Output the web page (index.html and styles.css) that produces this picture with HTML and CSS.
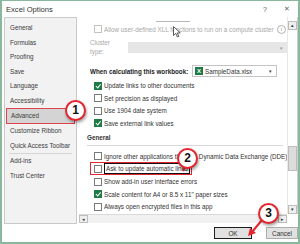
FILE: index.html
```html
<!DOCTYPE html>
<html lang="en">
<head>
  <meta charset="UTF-8">
  <title>Excel Options</title>
  <link rel="stylesheet" href="styles.css">
</head>
<body>
  <div class="window">
    <header class="titlebar">
      <span class="title">Excel Options</span>
      <span class="help">?</span>
      <span class="close">&#x2715;</span>
    </header>
    <div class="body">
      <nav class="nav">
        <div class="nav-item">General</div>
        <div class="nav-item">Formulas</div>
        <div class="nav-item">Proofing</div>
        <div class="nav-item">Save</div>
        <div class="nav-item">Language</div>
        <div class="nav-item">Accessibility</div>
        <div class="nav-item active">Advanced</div>
        <div class="nav-item">Customize Ribbon</div>
        <div class="nav-item">Quick Access Toolbar</div>
        <div class="nav-sep"></div>
        <div class="nav-item">Add-ins</div>
        <div class="nav-item">Trust Center</div>
      </nav>
      <div class="right">
        <div class="pane">
          <div class="scroll-area">
            <div class="content">
              <div class="tip-line"></div>
              <div class="row disabled">
                <span class="check"></span>
                <span class="label">Allow user-defined XLL functions to run on a compute cluster</span>
                <span class="info">i</span>
              </div>
              <div class="cluster">
                <span class="cluster-label">Cluster<br>type:</span>
                <span class="select wide"><span class="caret">&#9662;</span></span>
              </div>
              <div class="calc">
                <span class="bold">When calculating this workbook:</span>
                <span class="select book">
                  <span class="xl">X</span>
                  <span class="book-name">SampleData.xlsx</span>
                  <span class="caret dark">&#9662;</span>
                </span>
              </div>
              <div class="row"><span class="check on"></span><span>Update links to other documents</span></div>
              <div class="row"><span class="check"></span><span>Set precision as displayed</span></div>
              <div class="row"><span class="check"></span><span>Use 1904 date system</span></div>
              <div class="row"><span class="check on"></span><span>Save external link values</span></div>
              <div class="section">General</div>
              <div class="row"><span class="check"></span><span>Ignore other applications that use Dynamic Data Exchange (DDE)</span></div>
              <div class="row marked"><span class="check"></span><span class="focus">Ask to update automatic links</span></div>
              <div class="row"><span class="check"></span><span>Show add-in user interface errors</span></div>
              <div class="row"><span class="check on"></span><span>Scale content for A4 or 8.5 x 11" paper sizes</span></div>
              <div class="row"><span class="check"></span><span>Always open encrypted files in this app</span></div>
              <div class="row cut"><span>At</span></div>
            </div>
            <div class="vscroll">
              <span class="arrow">&#9652;</span>
              <span class="thumb"></span>
              <span class="arrow">&#9662;</span>
            </div>
          </div>
          <div class="hscroll">
            <span class="arrow">&#9666;</span>
            <span class="arrow">&#9656;</span>
          </div>
        </div>
        <div class="footer">
          <button class="btn ok">OK</button>
          <button class="btn">Cancel</button>
        </div>
      </div>
    </div>

    <!-- step markers drawn over the dialog -->
    <svg class="cursor" width="8" height="12" viewBox="0 0 8 12">
      <path d="M0.5 0.5 L0.5 9.5 L2.8 7.4 L4.4 11 L5.8 10.4 L4.3 6.9 L7.3 6.9 Z" fill="#fff" stroke="#333" stroke-width="0.8"/>
    </svg>
    <svg class="arrows" width="300" height="244" viewBox="0 0 300 244">
      <path d="M186 166 L183 171" stroke="#e3262f" stroke-width="2" fill="none"/>
      <path d="M262 220 L252 232" stroke="#e3262f" stroke-width="2" fill="none"/>
      <path d="M248 236 L250 228 L256 233 Z" fill="#e3262f"/>
    </svg>
    <span class="badge b1">1</span>
    <span class="badge b2">2</span>
    <span class="badge b3">3</span>
  </div>
</body>
</html>
```

FILE: styles.css
```css
body {
  margin: 0;
  background: #fff;
}
.window {
  position: relative;
  width: 300px;
  height: 244px;
  box-sizing: border-box;
  border: 2px solid #8ab89b;
  border-top-width: 1px;
  background: #fff;
  font-family: 'Liberation Sans', Arial, sans-serif;
  font-size: 6.3px;
  color: #333;
  overflow: hidden;
}
.titlebar {
  height: 16px;
  display: flex;
  align-items: center;
  padding: 0 8px 0 4px;
  font-size: 7.6px;
}
.title {
  flex: 1;
}
.help {
  color: #666;
  margin-right: 17px;
}
.close {
  color: #666;
  font-size: 7px;
}
.body {
  display: flex;
  padding-left: 2px;
}
.nav {
  width: 73px;
  flex-shrink: 0;
  height: 207px;
  box-sizing: border-box;
  border: 1px solid #c9c9c9;
  background: #f2f2f2;
  padding-top: 3px;
}
.nav-item {
  height: 14.5px;
  line-height: 14.5px;
  padding-left: 5px;
  color: #3a3a3a;
  white-space: nowrap;
}
.nav-item.active {
  margin: 0 1px;
  padding-left: 4px;
  height: 14px;
  border: 1px solid #e2434b;
  background: #d4d4d4;
}
.nav-sep {
  height: 1px;
  background: #d6d6d6;
  margin: 0 4px;
}
.right {
  flex: 1;
  min-width: 0;
  margin-left: 2px;
  display: flex;
  flex-direction: column;
}
.pane {
  height: 206px;
  display: flex;
  flex-direction: column;
}
.scroll-area {
  flex: 1;
  display: flex;
  min-height: 0;
}
.content {
  flex: 1;
  min-width: 0;
  overflow: hidden;
  padding: 6px 0 0 8px;
  position: relative;
}
.tip-line {
  position: absolute;
  left: 77px;
  top: 4px;
  width: 34px;
  height: 1px;
  background: #b8b8b8;
}
.row {
  display: flex;
  align-items: center;
  height: 12.5px;
  padding-left: 7px;
  white-space: nowrap;
}
.row.disabled {
  color: #a8a8a8;
}
.label {
  flex: 1;
}
.check {
  width: 6px;
  height: 6px;
  border: 1px solid #7a7a7a;
  background: #fff;
  margin-right: 2px;
  flex-shrink: 0;
  position: relative;
}
.disabled .check {
  border-color: #c2c2c2;
}
.check.on {
  background: #1f7a45;
  border-color: #1f7a45;
}
.check.on::after {
  content: "";
  position: absolute;
  left: 1.5px;
  top: 0;
  width: 1.5px;
  height: 3.5px;
  border: solid #fff;
  border-width: 0 1px 1px 0;
  transform: rotate(40deg);
}
.info {
  width: 7px;
  height: 7px;
  flex-shrink: 0;
  border: 1px solid #b0b0b0;
  border-radius: 50%;
  font-size: 6px;
  line-height: 7px;
  text-align: center;
  margin-right: 1px;
  color: #a0a0a0;
}
.cluster {
  display: flex;
  align-items: center;
  height: 18px;
  margin-top: 3.3px;
  padding-left: 3px;
  color: #a8a8a8;
  line-height: 8.5px;
}
.cluster-label {
  width: 38px;
}
.select {
  height: 11px;
  box-sizing: border-box;
  display: flex;
  align-items: center;
}
.select.wide {
  flex: 1;
  background: #e6e6e6;
  justify-content: flex-end;
  padding-right: 4px;
}
.caret {
  font-size: 5px;
  color: #9a9a9a;
}
.caret.dark {
  color: #333;
  margin-left: auto;
}
.calc {
  display: flex;
  align-items: center;
  height: 16px;
  margin-top: 6.5px;
  padding-left: 3px;
  white-space: nowrap;
}
.bold {
  font-weight: bold;
  color: #222;
  width: 102px;
}
.select.book {
  width: 85px;
  height: 12px;
  border: 1px solid #c4c4c4;
  padding: 0 4px 0 2px;
}
.xl {
  width: 8px;
  height: 8px;
  background: #1d7a44;
  color: #fff;
  font-size: 6px;
  font-weight: bold;
  line-height: 8px;
  text-align: center;
  margin-right: 2px;
}
.section {
  height: 14px;
  line-height: 14px;
  margin-top: 2px;
  border-bottom: 1px solid #d8d8d8;
  margin-bottom: 3.7px;
  font-weight: bold;
  color: #333;
  margin-right: 4px;
}
.row.marked {
  margin-left: 3px;
  padding-left: 3px;
  width: 97px;
  height: 11px;
  border: 1px solid #e3262f;
}
.focus {
  border: 1px solid #111;
  padding: 0 1px;
  line-height: 9px;
}
.row.cut {
  padding-left: 2px;
}
.vscroll {
  width: 9px;
  flex-shrink: 0;
  display: flex;
  flex-direction: column;
  align-items: center;
  border-left: 1px solid #e8e8e8;
  border-right: 1px solid #cfcfcf;
  padding-top: 4px;
}
.arrow {
  width: 7px;
  height: 7px;
  border: 1px solid #bdbdbd;
  background: #efefef;
  font-size: 5px;
  line-height: 7px;
  text-align: center;
  color: #333;
}
.thumb {
  width: 7px;
  height: 23px;
  margin: auto 0 34px;
  background: #dcdcdc;
  border: 1px solid #bdbdbd;
}
.hscroll {
  height: 8px;
  display: flex;
  justify-content: space-between;
  background: #f1f1f1;
  border-top: 1px solid #dadada;
  margin-right: 11px;
}
.hscroll .arrow {
  height: 6px;
  line-height: 6px;
}
.footer {
  display: flex;
  justify-content: flex-end;
  gap: 14px;
  padding: 4px 0 0;
}
.btn {
  height: 12px;
  padding: 0;
  font-family: inherit;
  font-size: 6.4px;
  color: #333;
  background: #e1e1e1;
  border: 1px solid #adadad;
}
.btn.ok {
  width: 38px;
  border-color: #1f1f1f;
}
.btn:last-child {
  width: 32px;
}
.cursor {
  position: absolute;
  left: 171px;
  top: 25px;
}
.arrows {
  position: absolute;
  left: -2px;
  top: -1px;
}
.badge {
  position: absolute;
  width: 17px;
  height: 17px;
  border: 2px solid #e3262f;
  border-radius: 50%;
  background: #fff;
  box-shadow: 1px 2px 3px rgba(0, 0, 0, 0.35);
  font-family: 'Liberation Sans', Arial, sans-serif;
  font-weight: bold;
  font-size: 12px;
  line-height: 17px;
  text-align: center;
  color: #111;
}
.b1 { left: 63px; top: 99px; }
.b2 { left: 175px; top: 147px; }
.b3 { left: 256px; top: 202px; }
```
